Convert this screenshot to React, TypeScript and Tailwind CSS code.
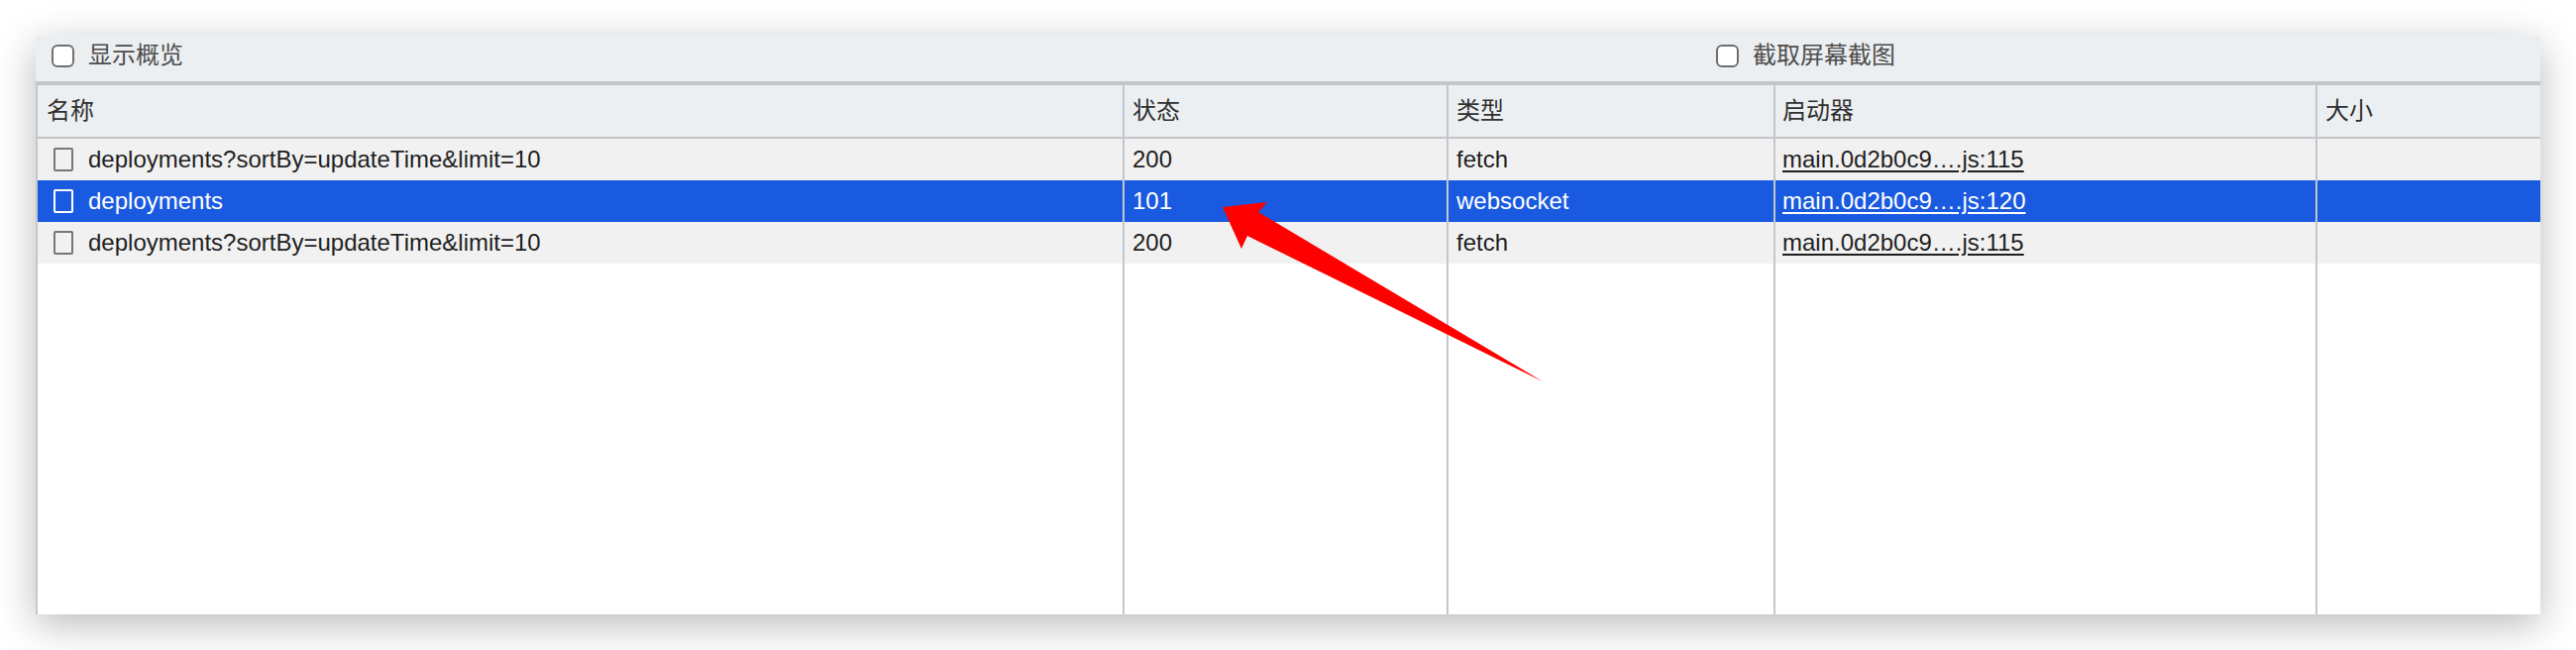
import React from 'react'

type Row = {
  name: string
  status: string
  type: string
  initiator: string
  selected?: boolean
}

const rows: Row[] = [
  { name: 'deployments?sortBy=updateTime&limit=10', status: '200', type: 'fetch', initiator: 'main.0d2b0c9….js:115' },
  { name: 'deployments', status: '101', type: 'websocket', initiator: 'main.0d2b0c9….js:120', selected: true },
  { name: 'deployments?sortBy=updateTime&limit=10', status: '200', type: 'fetch', initiator: 'main.0d2b0c9….js:115' },
]

const font = { fontFamily: '"Liberation Sans", "Noto Sans CJK SC", sans-serif' }

function ToolbarCheck({ label }: { label: string }) {
  return (
    <div className="flex items-center gap-[14px]">
      <span className="w-[23px] h-[23px] rounded-[6px] border-2 border-[#6f6f6f] bg-white" />
      <span className="text-[24px] leading-none text-[#4d4d4d]">{label}</span>
    </div>
  )
}

export default function App() {
  const head = 'flex items-center bg-[#eceff1] border-l-2 border-b-2 border-[#c3c7cb] text-[24px] leading-none text-[#303030]'

  return (
    <div className="relative w-[2600px] h-[656px] bg-white overflow-hidden pt-[36px] pl-[36px]" style={font}>
      <div className="w-[2528px] h-[584px] flex flex-col bg-white shadow-[0_10px_38px_rgba(0,0,0,0.28)]">
        {/* toolbar */}
        <div className="h-[46px] shrink-0 bg-[#eceff1] flex items-center pb-[6px] pl-[16px]">
          <div className="w-[1680px]">
            <ToolbarCheck label="显示概览" />
          </div>
          <ToolbarCheck label="截取屏幕截图" />
        </div>
        <div className="h-[4px] shrink-0 bg-[#c3c7cb]" />

        {/* table */}
        <div className="flex-1 grid grid-cols-[1097px_327px_330px_547px_227px] grid-rows-[54px_42px_42px_42px_1fr]">
          <div className={`${head} pl-[9px]`}>名称</div>
          <div className={`${head} pl-[8px]`}>状态</div>
          <div className={`${head} pl-[8px]`}>类型</div>
          <div className={`${head} pl-[7px]`}>启动器</div>
          <div className={`${head} pl-[8px]`}>大小</div>

          {rows.map((r, i) => {
            const cell = `flex items-center border-l-2 border-[#c3c7cb] text-[24px] leading-none whitespace-nowrap ${
              r.selected ? 'bg-[#1a5ae0] text-white' : 'bg-[#f1f1f1] text-[#1f1f1f]'
            }`
            return (
              <React.Fragment key={i}>
                <div className={`${cell} pl-[16px] gap-[15px]`}>
                  <span
                    className={`w-[20px] h-[24px] rounded-[2px] border-2 ${
                      r.selected ? 'border-white' : 'border-[#777777]'
                    }`}
                  />
                  <span>{r.name}</span>
                </div>
                <div className={`${cell} pl-[8px]`}>{r.status}</div>
                <div className={`${cell} pl-[8px]`}>{r.type}</div>
                <div className={`${cell} pl-[7px]`}>
                  <span className="underline underline-offset-[3px]">{r.initiator}</span>
                </div>
                <div className={cell} />
              </React.Fragment>
            )
          })}

          <div className="border-l-2 border-[#c3c7cb]" />
          <div className="border-l-2 border-[#c3c7cb]" />
          <div className="border-l-2 border-[#c3c7cb]" />
          <div className="border-l-2 border-[#c3c7cb]" />
          <div className="border-l-2 border-[#c3c7cb]" />
        </div>
      </div>

      {/* annotation arrow */}
      <svg className="absolute left-0 top-0 pointer-events-none" width="2600" height="656" viewBox="0 0 2600 656">
        <polygon
          points="1234,209 1279,204 1270,214 1557,385 1259,238 1253,251"
          fill="#ff0000"
        />
      </svg>
    </div>
  )
}
